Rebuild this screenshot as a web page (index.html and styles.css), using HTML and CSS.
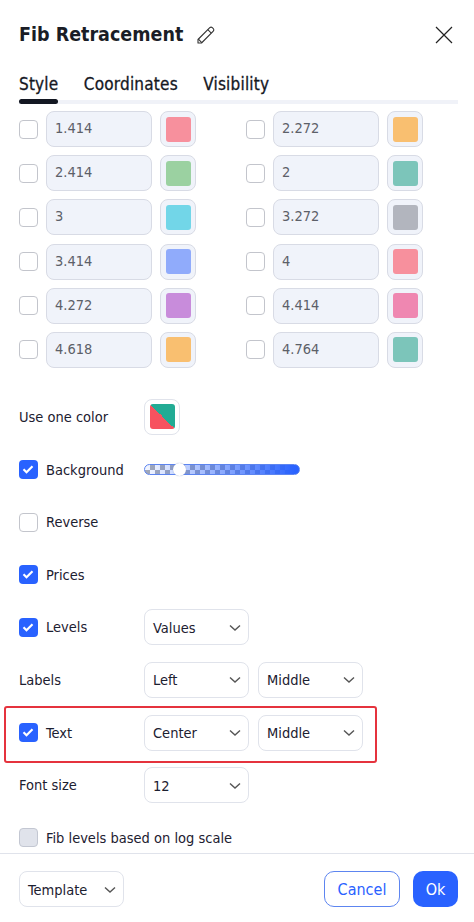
FILE: index.html
```html
<!DOCTYPE html>
<html lang="en">
<head>
<meta charset="utf-8">
<title>Fib Retracement</title>
<link rel="stylesheet" href="styles.css">
</head>
<body>
<div class="dialog">
  <header class="head">
    <h1 class="title">Fib Retracement</h1>
    <svg class="pencil" viewBox="0 0 20 20" width="20" height="20" fill="none" stroke="#333" stroke-width="1.1" stroke-linejoin="round"><path d="M2 14.5 13.8 2.7a1.8 1.8 0 0 1 2.5 0l1 1a1.8 1.8 0 0 1 0 2.5L5.5 18H2z"/><path d="m11.8 4.7 3.5 3.5M2.4 14.2l3.4 3.4"/></svg>
    <svg class="close" viewBox="0 0 18 18" width="18" height="18" fill="none" stroke="#222" stroke-width="1.2"><path d="M1 1l16 16M17 1 1 17"/></svg>
  </header>
  <nav class="tabs">
    <span class="tab active">Style</span>
    <span class="tab">Coordinates</span>
    <span class="tab">Visibility</span>
  </nav>
  <section class="levels">
    <div class="level"><span class="box"></span><span class="num">1.414</span><span class="sw"><i class="c-red"></i></span></div>
    <div class="level"><span class="box"></span><span class="num">2.272</span><span class="sw"><i class="c-orange"></i></span></div>
    <div class="level"><span class="box"></span><span class="num">2.414</span><span class="sw"><i class="c-green"></i></span></div>
    <div class="level"><span class="box"></span><span class="num">2</span><span class="sw"><i class="c-teal"></i></span></div>
    <div class="level"><span class="box"></span><span class="num">3</span><span class="sw"><i class="c-cyan"></i></span></div>
    <div class="level"><span class="box"></span><span class="num">3.272</span><span class="sw"><i class="c-gray"></i></span></div>
    <div class="level"><span class="box"></span><span class="num">3.414</span><span class="sw"><i class="c-blue"></i></span></div>
    <div class="level"><span class="box"></span><span class="num">4</span><span class="sw"><i class="c-red"></i></span></div>
    <div class="level"><span class="box"></span><span class="num">4.272</span><span class="sw"><i class="c-purple"></i></span></div>
    <div class="level"><span class="box"></span><span class="num">4.414</span><span class="sw"><i class="c-pink"></i></span></div>
    <div class="level"><span class="box"></span><span class="num">4.618</span><span class="sw"><i class="c-orange"></i></span></div>
    <div class="level"><span class="box"></span><span class="num">4.764</span><span class="sw"><i class="c-teal"></i></span></div>
  </section>
  <section class="opts">
    <div class="row"><label class="lab">Use one color</label><span class="sw white"><i class="c-split"></i></span></div>
    <div class="row"><label class="lab"><span class="box on"><svg viewBox="0 0 18 18" width="18" height="18" fill="none" stroke="#fff" stroke-width="2.2"><path d="m4.5 9.3 3 2.9 6-6"/></svg></span>Background</label><div class="slider"><span class="knob"></span></div></div>
    <div class="row"><label class="lab"><span class="box"></span>Reverse</label></div>
    <div class="row"><label class="lab"><span class="box on"><svg viewBox="0 0 18 18" width="18" height="18" fill="none" stroke="#fff" stroke-width="2.2"><path d="m4.5 9.3 3 2.9 6-6"/></svg></span>Prices</label></div>
    <div class="row"><label class="lab"><span class="box on"><svg viewBox="0 0 18 18" width="18" height="18" fill="none" stroke="#fff" stroke-width="2.2"><path d="m4.5 9.3 3 2.9 6-6"/></svg></span>Levels</label><div class="sel">Values<svg class="chev" viewBox="0 0 12 8" width="12" height="8" fill="none" stroke="#555" stroke-width="1.4"><path d="m1 1.5 5 4.5 5-4.5"/></svg></div></div>
    <div class="row"><label class="lab">Labels</label><div class="sel">Left<svg class="chev" viewBox="0 0 12 8" width="12" height="8" fill="none" stroke="#555" stroke-width="1.4"><path d="m1 1.5 5 4.5 5-4.5"/></svg></div><div class="sel">Middle<svg class="chev" viewBox="0 0 12 8" width="12" height="8" fill="none" stroke="#555" stroke-width="1.4"><path d="m1 1.5 5 4.5 5-4.5"/></svg></div></div>
    <div class="row hl"><label class="lab"><span class="box on"><svg viewBox="0 0 18 18" width="18" height="18" fill="none" stroke="#fff" stroke-width="2.2"><path d="m4.5 9.3 3 2.9 6-6"/></svg></span>Text</label><div class="sel">Center<svg class="chev" viewBox="0 0 12 8" width="12" height="8" fill="none" stroke="#555" stroke-width="1.4"><path d="m1 1.5 5 4.5 5-4.5"/></svg></div><div class="sel">Middle<svg class="chev" viewBox="0 0 12 8" width="12" height="8" fill="none" stroke="#555" stroke-width="1.4"><path d="m1 1.5 5 4.5 5-4.5"/></svg></div></div>
    <div class="row"><label class="lab">Font size</label><div class="sel">12<svg class="chev" viewBox="0 0 12 8" width="12" height="8" fill="none" stroke="#555" stroke-width="1.4"><path d="m1 1.5 5 4.5 5-4.5"/></svg></div></div>
    <div class="row"><label class="lab wide"><span class="box off"></span>Fib levels based on log scale</label></div>
  </section>
  <footer class="foot">
    <div class="sel">Template<svg class="chev" viewBox="0 0 12 8" width="12" height="8" fill="none" stroke="#555" stroke-width="1.4"><path d="m1 1.5 5 4.5 5-4.5"/></svg></div>
    <span class="btn cancel">Cancel</span>
    <span class="btn ok">Ok</span>
  </footer>
</div>
</body>
</html>
```
FILE: styles.css
```css
* { box-sizing: border-box; }
html, body { margin: 0; padding: 0; background: #fff; }
body { font-family: "DejaVu Sans", "Noto Sans", sans-serif; font-stretch: condensed; color: #1c2030; font-size: 14.5px; }
.dialog { width: 474px; height: 922px; overflow: hidden; display: flex; flex-direction: column; }
.head { height: 69px; padding: 0 16px 0 19px; display: flex; align-items: center; flex: none; }
.title { margin: 0; font-size: 19.5px; font-weight: 700; color: #1a1d26; }
.pencil { margin-left: 13px; }
.close { margin-left: auto; margin-right: 5px; }
.tabs { margin: 0 16px 0 19px; height: 35px; flex: none; display: flex; gap: 25.4px; border-bottom: 4px solid #f0f2f8; align-items: flex-start; padding-top: 3px; }
.tab { font-size: 17px; letter-spacing: 0.2px; -webkit-text-stroke: 0.3px #15181f; color: #15181f; height: 28px; line-height: 24px; position: relative; }
.tab.active::after { content: ""; position: absolute; left: 0; right: 0; bottom: -4px; height: 5px; border-radius: 3px; background: #131722; }
.levels { padding: 7px 0 0 19px; display: grid; grid-template-columns: 227px 200px; row-gap: 8.2px; flex: none; }
.level { display: flex; align-items: center; height: 36px; }
.box { width: 19px; height: 19px; border: 1.5px solid #c3c5cc; border-radius: 4px; background: #fff; flex: none; margin-right: 8px; display: inline-block; }
.box.on { background: #2962ff; border: none; }
.box.on svg { display: block; }
.box.off { background: #e0e3eb; border-color: #c3c7d2; }
.num { width: 106px; height: 36px; border: 1.5px solid #d8dbe5; border-radius: 8px; background: #f0f3fa; color: #5c6068; line-height: 33px; padding-left: 8px; font-size: 14.5px; }
.sw { width: 36px; height: 36px; margin-left: 8px; border: 1.5px solid #d8dbe5; border-radius: 8px; background: #f0f3fa; display: flex; align-items: center; justify-content: center; flex: none; }
.sw.white { background: #fff; margin-left: 0; border-color: #e0e3eb; }
.sw i { width: 25px; height: 25px; border-radius: 3px; display: block; }
.c-red { background: #f7909d; }
.c-orange { background: #f9bf70; }
.c-green { background: #9bd1a1; }
.c-teal { background: #7cc5ba; }
.c-cyan { background: #72d6e8; }
.c-gray { background: #b2b5be; }
.c-blue { background: #90abfb; }
.c-purple { background: #c88cdb; }
.c-pink { background: #ef87b1; }
.c-split { background: linear-gradient(45deg, #f7525f 50%, #22ab94 50%); }
.opts { padding: 31px 0 0 19px; flex: 1; min-height: 0; display: flex; flex-direction: column; gap: 16.6px; }
.row { display: flex; align-items: center; height: 36px; flex: none; gap: 9px; position: relative; }
.lab { width: 116px; display: flex; align-items: center; flex: none; color: #1c2030; font-size: 14.5px; }
.lab.wide { width: auto; }
.slider { width: 156px; height: 11px; border-radius: 6px; position: relative; background: linear-gradient(90deg, rgba(41,98,255,0.05), #2962ff 98%), repeating-conic-gradient(#a9acb4 0 25%, #fff 0 50%) 0 0 / 10px 10px; border: 1px solid #5d85f0; }
.knob { position: absolute; left: 28px; top: -2px; width: 13px; height: 13px; border-radius: 50%; background: #fff; box-shadow: 0 0 1px #8899bb; }
.sel { width: 105px; height: 36px; flex: none; border: 1.5px solid #e0e3eb; border-radius: 8px; background: #fff; display: flex; align-items: center; justify-content: space-between; padding: 1px 7px 0 8px; font-size: 14.5px; color: #1c2030; }
.hl::after { content: ""; position: absolute; left: -15px; top: -9px; width: 369px; height: 53px; border: 2px solid #e5333d; border-radius: 3px; }
.foot { flex: none; height: 69px; border-top: 1px solid #e0e3eb; display: flex; align-items: center; padding: 2px 16px 0 19px; }
.btn { height: 36px; display: flex; align-items: center; justify-content: center; border-radius: 10px; font-size: 16px; }
.cancel { margin-left: auto; width: 76px; border: 1.5px solid #5d85f0; color: #2962ff; }
.ok { margin-left: 13px; width: 45px; background: #2962ff; color: #fff; }
```
